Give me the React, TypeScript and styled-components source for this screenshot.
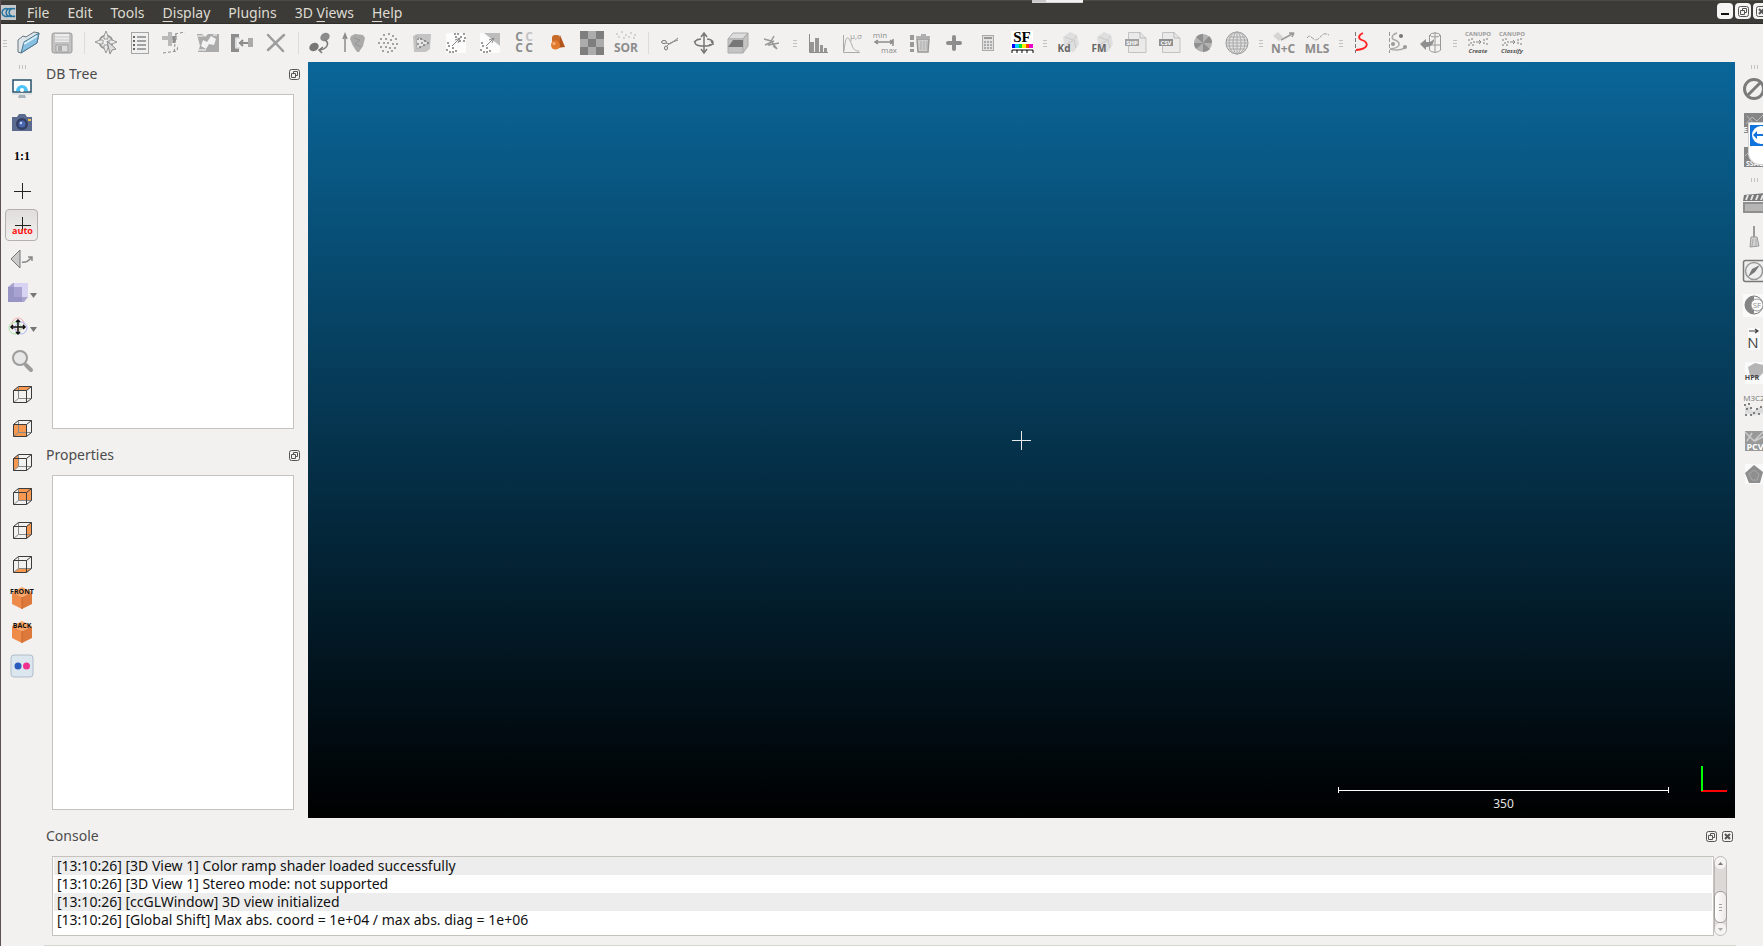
import React from "react";
import styled, { createGlobalStyle, css } from "styled-components";

const GlobalStyle = createGlobalStyle`
  * { box-sizing: border-box; }
  body { margin: 0; background: #f2f1f0; }
  button { font: inherit; color: inherit; background: none; border: 0; margin: 0; padding: 0; }
`;

const Window = styled.div`
  display: flex;
  flex-direction: column;
  height: 100vh;
  overflow: hidden;
  border-left: 1px solid #5e5054;
  background: #f2f1f0;
  color: #4c4c4c;
  font-family: "Noto Sans", "Open Sans", sans-serif;
  font-size: 14px;
`;

const MenuBar = styled.header`
  position: relative;
  display: flex;
  align-items: center;
  flex: none;
  height: 24px;
  background: #3c3b37;
  border-top: 1px solid #4b4a43;
  border-bottom: 1px solid #2f2e2b;
  color: #dfdbd2;
`;

const Menus = styled.nav`
  display: flex;
  margin-left: 2px;
`;

const MenuButton = styled.button`
  padding: 2px 9px 0;
  line-height: 20px;
`;

const Mnemonic = styled.span`
  text-decoration: underline;
  text-underline-offset: 3px;
  text-decoration-thickness: 1px;
`;

const WindowButtons = styled.div`
  display: flex;
  gap: 2px;
  margin: 0 -6px 2px auto;
`;

const WindowButton = styled.button`
  display: grid;
  place-items: center;
  width: 16px;
  height: 16px;
  border-radius: 4px;
  background: #f6f5f4;
`;

const HiddenPanelTab = styled.div`
  position: absolute;
  top: -1px;
  left: calc(58% + 9px);
  width: 51px;
  height: 3px;
  background: linear-gradient(90deg, #c9c9c9 14px, #f2f2f2 14px);
  border-bottom: 1px solid #d5d5d5;
`;

const TopToolbar = styled.div`
  display: flex;
  align-items: center;
  flex: none;
  height: 38px;
  margin-left: -2px;
`;

const SideToolbar = styled.div<{ $width: number; $inset: number }>`
  display: flex;
  flex-direction: column;
  flex: none;
  width: ${(p) => p.$width}px;
  padding-left: ${(p) => p.$inset}px;
  overflow: hidden;
`;

const ToolButton = styled.button<{ $pressed?: boolean }>`
  display: flex;
  align-items: center;
  justify-content: center;
  flex: none;
  width: 34px;
  height: 34px;
  svg { display: block; flex: none; overflow: visible; }
  ${(p) =>
    p.$pressed &&
    css`
      height: 32px;
      margin: 1px 0;
      width: 33px;
      border: 1px solid #b4b1ad;
      border-radius: 4px;
      background: linear-gradient(#e0dedc, #f0efee);
    `}
`;

const Grip = styled.div<{ $side?: boolean }>`
  flex: none;
  width: ${(p) => (p.$side ? "34px" : "12px")};
  height: ${(p) => (p.$side ? "10px" : "38px")};
  display: flex;
  flex-direction: ${(p) => (p.$side ? "row" : "column")};
  align-items: center;
  justify-content: center;
  gap: 2px;
  i {
    width: ${(p) => (p.$side ? "1px" : "4px")};
    height: ${(p) => (p.$side ? "4px" : "1px")};
    background: #c4c2c0;
  }
  ${SideToolbar} button + & { margin: 1px 0; }
`;

const Separator = styled.div`
  flex: none;
  width: 10px;
  height: 22px;
  background: linear-gradient(#dddbd9, #dddbd9) center / 1px 100% no-repeat;
`;

const Main = styled.div`
  display: flex;
  flex: 1;
  min-height: 0;
`;

const Center = styled.main`
  display: flex;
  flex-direction: column;
  flex: 1;
  min-width: 0;
`;

const Workspace = styled.div`
  display: flex;
  flex: 1;
  min-height: 0;
  padding-right: 1px;
`;

const Docks = styled.aside`
  display: flex;
  flex-direction: column;
  gap: 14px;
  flex: none;
  width: 264px;
  padding-bottom: 8px;
`;

const Dock = styled.section`
  display: flex;
  flex-direction: column;
  flex: 1;
`;

const DockTitle = styled.div<{ $right: number }>`
  display: flex;
  align-items: center;
  gap: 5px;
  flex: none;
  height: 24px;
  padding: 0 ${(p) => p.$right}px 0 2px;
  h2 {
    margin: 0 auto 0 0;
    font-size: 14px;
    font-weight: 400;
    line-height: 20px;
  }
`;

const DockButton = styled.button`
  width: 11px;
  height: 11px;
  svg { display: block; }
`;

const DockBody = styled.div`
  flex: 1;
  margin: 8px 14px 0 8px;
  border: 1px solid #c6c3bf;
  background: #fff;
`;

const Viewport = styled.div`
  position: relative;
  flex: 1;
  background: linear-gradient(#0a6699, #000);
`;

const Crosshair = styled.svg`
  position: absolute;
  left: calc(50% - 10px);
  top: calc(50% - 9px);
`;

const ScaleBar = styled.div`
  position: absolute;
  right: 66px;
  bottom: 4px;
  width: 331px;
  color: #e4e4e4;
  font-size: 12px;
  line-height: 20px;
  text-align: center;
  svg { display: block; width: 100%; }
`;

const Axes = styled.svg`
  position: absolute;
  right: 8px;
  bottom: 26px;
`;

const Console = styled.section`
  flex: none;
  padding: 6px 0 9px;
  border-bottom: 1px solid #d8d6d3;
`;

const ConsoleBody = styled.div`
  display: flex;
  height: 80px;
  margin: 8px 9px 0 8px;
`;

const Log = styled.ol`
  flex: 1;
  margin: 0;
  padding: 0 1px;
  list-style: none;
  border: 1px solid #c6c3bf;
  background: #fff;
  color: #111;
  line-height: 18px;
  li { padding-left: 3px; white-space: nowrap; }
  li:nth-child(odd) { background: #ededed; }
`;

const ScrollTrack = styled.div`
  display: flex;
  flex-direction: column;
  align-items: center;
  flex: none;
  width: 13px;
  border: 1px solid #bcb8b4;
  border-radius: 7px;
  background: #dcd9d6;
`;

const ScrollArrow = styled.button`
  width: 11px;
  height: 12px;
  border-radius: 6px;
  background: #f4f3f2;
  svg { display: block; margin: auto; }
`;

const ScrollThumb = styled.div`
  display: flex;
  flex-direction: column;
  align-items: center;
  justify-content: center;
  gap: 2px;
  width: 13px;
  height: 32px;
  margin-top: auto;
  border: 1px solid #9f9b97;
  border-radius: 6px;
  background: linear-gradient(90deg, #fff, #eceae8);
  i { width: 3px; height: 1px; background: #a5a29e; }
`;

const RemoteBadge = styled.div`
  position: absolute;
  right: 0;
  top: 122px;
  width: 15px;
  height: 43px;
  overflow: hidden;
  border: 1px solid #d5d5d5;
  border-right: 0;
  border-radius: 2px 0 0 12px;
  background: #fff;
`;

function Icon({ size = 24, children }: { size?: number; children: React.ReactNode }) {
  return (
    <svg width={size} height={size} viewBox="0 0 24 24" fill="none" aria-hidden="true">
      {children}
    </svg>
  );
}

const G = "#8c8c8c";
const L = "#b9b9b9";

const sans = "Open Sans, sans-serif";

function Label({ x = 12, y, size, fill = G, weight = 700, font = sans, italic, children }: {
  x?: number; y: number; size: number; fill?: string; weight?: number; font?: string; italic?: boolean; children: string;
}) {
  return (
    <text x={x} y={y} fontSize={size} fill={fill} fontWeight={weight} fontFamily={font}
      fontStyle={italic ? "italic" : "normal"} textAnchor="middle">{children}</text>
  );
}

function Dots({ at, r = 1, fill = "#666" }: { at: number[][]; r?: number; fill?: string }) {
  return (
    <g fill={fill}>
      {at.map(([x, y]) => <rect key={`${x}-${y}`} x={x - r / 2} y={y - r / 2} width={r} height={r} />)}
    </g>
  );
}

const cloud = [[8, 4], [13, 3], [17, 5], [5, 8], [10, 8], [15, 9], [20, 8], [3, 12], [8, 12], [12, 12], [17, 13], [21, 13], [5, 16], [10, 16], [14, 17], [19, 17], [7, 20], [12, 21], [16, 20]];

const art = {
  open: <><path d="M2 9 7 5l3 1 8-5 5 1-2 10L5 22l-3-1z" fill="#dfe6ea" stroke="#66767f" /><path d="m5 22 3-11L23 2l-2 10z" fill="#86bfe0" stroke="#4c7893" /><path d="m8 13 13-8" stroke="#dcf0fb" strokeWidth="2" /></>,
  save: <><rect x="2" y="2" width="20" height="20" rx="2" fill="#c2c2c2" stroke="#9c9c9c" /><path d="M5 3h14v8H5z" fill="#ececec" /><path d="M5 6h14M5 9h14" stroke="#c6c6c6" /><path d="M6 14h12v7H6z" fill="#dadada" stroke="#a0a0a0" /><path d="M8 15h4v5H8z" fill="#aaa" /></>,
  pick: <><circle cx="12" cy="11" r="6.500" stroke={G} strokeWidth="1.500" /><path d="m12 0 2 5v3h-4V5zM1 11l5-2h3v4H6zM23 11l-5-2h-3v4h3zM10 14h4v3l-2 5-2-5z" fill="#ececec" stroke="#999" /><path d="m13 10 9 8-4 1-2 4z" fill="#ddd" stroke={G} /></>,
  list: <><rect x="3.500" y="1.500" width="17" height="21" fill="#f0f0f0" stroke="#a5a5a5" /><path d="M9 6h9M9 10h9M9 14h9M9 18h9" stroke="#888" strokeWidth="1.500" /><Dots r={2} at={[[6, 6], [6, 10], [6, 14], [6, 18]]} /></>,
  clone: <><path d="M8 1v14M0 7h15" stroke={L} strokeWidth="4" /><path d="m13 3 10-2M14 3l-2 19M1 22l14-2 1-6" stroke={G} strokeDasharray="3 2" /><path d="M12 5v7" stroke={G} strokeWidth="3" /></>,
  merge: <><path d="M1 3h5l3 3 3-3h11v18H2l2-6z" fill="#ababab" /><path d="m7 9 4 2 4-6 5 3-2 6-5-1-3 5-5-3z" fill="#f3f3f3" /><path d="M2 5h5M17 4h4M3 19h7" stroke="#d5d5d5" strokeWidth="2" /></>,
  subtract: <><path d="M9 5H3v14h6" stroke="#8d8d8d" strokeWidth="4" /><path d="M10 7H6v10h4" stroke="#d8d8d8" strokeWidth="1.500" /><path d="M18 12H9m4-3-3 3 3 3" stroke={G} strokeWidth="2" /><path d="M18 7h5v9h-5z" fill="#aaa" /></>,
  del: <path d="m4 4 15 16M20 4 4 19" stroke="#9c9c9c" strokeWidth="2.500" strokeLinecap="round" />,
  transform: <><ellipse cx="6" cy="16" rx="5" ry="4" fill="#777" transform="rotate(-35 6 16)" /><ellipse cx="17" cy="6" rx="5" ry="4" fill="#8b8b8b" transform="rotate(-35 17 6)" /><path d="M17 9c5 3 2 9-5 10m3-3-4 3 3 3" stroke="#777" strokeWidth="1.500" /></>,
  normals: <><path d="M3 21V4M1 8l2-5 2 5" stroke={G} strokeWidth="1.500" /><path d="m9 5 4-2 8 1 2 3-2 8-4 6h-2l-4-6-3-7z" fill="#aaa" /><path d="m12 7 6 2-5 4 6 3" stroke="#959595" /></>,
  points: <Dots at={cloud} r={1.500} />,
  mesh: <><path d="m3 5 4-2h14l-1 15-4 3H4z" fill="#c4c4c4" /><path d="m6 5 1 13 12-6z" fill="#e6e6e6" stroke="#aaa" /><Dots at={[[8, 8], [8, 13], [11, 8], [12, 12], [10, 16], [15, 10], [14, 14], [18, 12]]} r={1.500} /></>,
  c2c: <><rect width="20" height="20" x="2" y="2" fill="#fcfcfc" /><Dots at={[[4, 12], [5, 15], [3, 19], [6, 21], [9, 17], [9, 21], [12, 20], [14, 3], [17, 6], [20, 3], [21, 7], [20, 10], [16, 10], [12, 6], [11, 3]]} r={1.600} /><path d="m8 15 7-7m-4 1 5-2-2 5" stroke="#888" /></>,
  c2m: <><rect width="20" height="20" x="2" y="2" fill="#fcfcfc" /><path d="M6 2h16v13z" fill="#bcbcbc" /><Dots at={[[4, 12], [5, 15], [3, 19], [6, 21], [9, 17], [9, 21], [12, 20]]} r={1.600} /><path d="m8 15 7-7m-4 1 5-2-2 5" stroke="#888" /></>,
  cccc: <><Label x={7} y={10} size={12}>C</Label><Label x={17} y={10} size={12} fill="#c4c4c4">C</Label><Label x={7} y={21} size={12}>C</Label><Label x={17} y={21} size={12}>C</Label></>,
  primitives: <><path d="m14 4 5 12-8 1z" fill="#b3541b" /><rect x="6" y="4" width="8" height="8" rx="3" fill="#c86a28" /><circle cx="9.500" cy="14" r="4.500" fill="#e07b2f" /><circle cx="8" cy="12.500" r="1.500" fill="#f6b27c" /></>,
  checker: <><path d="M0 0h24v24H0z" fill="#acacac" /><path d="M0 0h8v8H0zM16 0h8v8h-8zM8 8h8v8H8zM0 16h8v8H0zM16 16h8v8h-8z" fill="#7e7e7e" /></>,
  sor: <><Dots at={[[3, 3], [8, 1], [12, 4], [17, 2], [21, 4], [5, 6], [10, 7], [15, 6], [20, 7]]} r={1.500} fill="#bbb" /><Label y={21} size={12}>SOR</Label></>,
  scissors: <><ellipse cx="6" cy="11" rx="2.500" ry="1.500" stroke="#777" /><ellipse cx="8" cy="17" rx="1.500" ry="2" stroke="#777" /><path d="m8 12 4 1 8-6M9 15l3-3 8-3" stroke="#888" /></>,
  rotate: <><path d="M12 3v18M9 6l3-4 3 4M9 18l3 4 3-4" stroke="#777" strokeWidth="1.500" /><path d="M9 8c-8 1-8 6 0 7M15 8c8 1 8 6 0 7H8m11-5 2 3-4 1M6 8l-4 3" stroke="#777" strokeWidth="1.500" /></>,
  section: <><path d="M7 2h15l-5 6H2z" fill="#ddd" stroke="#aaa" /><path d="M2 8h15v14H2zM17 8l5-6v13l-5 7" fill="#c4c4c4" stroke="#aaa" /><path d="m2 16 5-7h10v7z" fill="#777" /></>,
  polyline: <path d="m14 5-5 9 10-2M4 8l7 2 6 8-4-3M5 14l9-4" stroke="#999" strokeWidth="1.500" />,
  histogram: <><path d="M3.500 3v18.500H22" stroke={G} /><path d="M4 11h4v10H4zM9 7h4v14H9zM14 14h3v7h-3zM18 17h3v4h-3z" fill="#969696" /></>,
  stat: <><path d="M3.500 4v17.500H20M4 20C6 0 9 7 12 14c1 4 3 6 7 6" stroke="#aaa" /><Label x={16} y={8} size={8} weight={400} fill="#999">μ,σ</Label></>,
  minmax: <><Label x={6} y={7} size={8} weight={400}>min</Label><Label x={15} y={22} size={8} weight={400}>max</Label><path d="M1 11h17M4 9l-3 2 3 2M16 9l3 2-3 2M19 8v7" stroke={G} strokeWidth="1.500" /></>,
  delsf: <><path d="M4 4v17" stroke="#999" strokeWidth="4" strokeDasharray="5 2" /><path d="M8 6h14M13 4h5M9 8h12l-1 13H10z" fill="#cfcfcf" stroke="#999" strokeWidth="1.500" /><path d="M13 10v9M16 10v9M19 10v9" stroke="#aaa" /></>,
  plus: <path d="M12 6v12M6 12h12" stroke="#8d8d8d" strokeWidth="4" strokeLinecap="round" />,
  calc: <><rect x="6.500" y="4.500" width="11" height="15" fill="#e1e1e1" stroke="#aaa" /><path d="M8 7h8" stroke="#999" strokeWidth="2" /><path d="M8 11h8M8 14h8M8 17h8" stroke="#aaa" strokeWidth="2" strokeDasharray="2 1" /></>,
  sf: <><path d="M1 0h22v23H1z" fill="#fff" /><Label y={11} size={15} fill="#000" font="Liberation Serif, serif">SF</Label><path d="M2 13h3v4H2z" fill="#00f" /><path d="M5 13h4v4H5z" fill="#0cf" /><path d="M9 13h3v4H9z" fill="#0d3" /><path d="M12 13h4v4h-4z" fill="#fe0" /><path d="M16 13h3v4h-3z" fill="#f40" /><path d="M19 13h4v4h-4z" fill="#e0c" /><path d="M2 22v-3h21v3M7 19v3M12 19v3M17 19v3" stroke="#000" /></>,
  kd: <><path d="M7 6 14 1l7 3 2 9-5 8-9-1z" fill="#dedede" /><path d="m9 6 8 3 4-4M11 13l7-4 2 8" stroke="#c9c9c9" /><Label x={8} y={21} size={10} fill="#666">Kd</Label></>,
  fm: <><path d="M7 6 14 1l7 3 2 9-5 8-9-1z" fill="#dedede" /><path d="m9 6 8 3 4-4M11 13l7-4 2 8" stroke="#c9c9c9" /><Label x={9} y={21} size={10} fill="#666">FM</Label></>,
  shp: <><path d="M4.500 1.500H16l6 6v14H4.500z" fill="#eaeaea" stroke="#c2c2c2" /><path d="M16 1v6h6" stroke="#b9b9b9" /><rect x="1" y="8" width="14" height="7" fill="#a2a2a2" /><Label x={8} y={14} size={6} fill="#fff">SHP</Label></>,
  csv: <><path d="M4.500 1.500H16l6 6v14H4.500z" fill="#eaeaea" stroke="#c2c2c2" /><path d="M16 1v6h6" stroke="#b9b9b9" /><rect x="1" y="8" width="14" height="7" fill="#8f8f8f" /><Label x={8} y={14} size={6} fill="#fff">CSV</Label></>,
  pie: <><circle cx="11" cy="12" r="9" fill="#b2b2b2" /><path d="m11 12 6-7a9 9 0 0 1 3 7zM11 12l-7 6a9 9 0 0 1-2-6zM11 12v9a9 9 0 0 0 7-3zM11 12V3a9 9 0 0 0-7 3z" fill="#8f8f8f" /></>,
  sphere: <><circle cx="11" cy="12" r="11" fill="#e2e2e2" stroke="#999" /><path d="M11 1v22M1 9h20M1 15h20M0 12h22M3 6h16M3 18h16" stroke="#aaa" /><ellipse cx="11" cy="12" rx="4" ry="11" stroke="#aaa" /><ellipse cx="11" cy="12" rx="8" ry="11" stroke="#aaa" /></>,
  nc: <><path d="m1 5 5-4 5 5-4 4z" fill="#d4d4d4" /><path d="m9 9 13-7h-5m5 0-2 4" stroke="#999" strokeWidth="1.500" /><Label x={11} y={22} size={12}>N+C</Label></>,
  mls: <><path d="M1 7c4-6 6 5 11 1s5-7 11-4" stroke="#999" strokeDasharray="4 1" /><Label x={11} y={22} size={12}>MLS</Label></>,
  spline: <><path d="M3.500 1v21" stroke="#777" strokeDasharray="4 2" /><path d="M11 2C6 4 6 8 10 9c8 3 6 9-6 10" stroke="#f22" strokeWidth="1.800" /></>,
  splinePts: <><path d="M3.500 1v21" stroke="#999" strokeDasharray="4 2" /><path d="M11 2C5 4 5 8 9 9c7 3 5 8-5 9 7 2 11 1 15-1" stroke="#aaa" strokeWidth="1.500" /><circle cx="15" cy="5" r="2" fill="#777" /><circle cx="7" cy="13" r="2" fill="#999" /><circle cx="19" cy="16" r="2" fill="#999" /></>,
  unroll: <><ellipse cx="15" cy="4" rx="5" ry="2" stroke="#999" /><path d="M9.500 4v15c2 3 9 3 11 0V4M15 1v21M10 14h10" stroke="#999" /><path d="m0 13 6-5v3c4 0 5 0 8-3 0 6-4 8-8 8v3z" fill="#8f8f8f" /></>,
  canupoCreate: <><Label y={5} size={6} fill="#999">CANUPO</Label><Dots at={[[3, 9], [6, 8], [5, 12], [8, 11], [3, 14], [7, 14], [18, 9], [21, 8], [18, 12], [21, 13]]} r={1.500} fill="#888" /><path d="M10 11h5m-2-2 2 2-2 2" stroke="#888" /><Label y={22} size={6} fill="#555" italic>Create</Label></>,
  canupoClassify: <><Label y={5} size={6} fill="#999">CANUPO</Label><Dots at={[[3, 9], [6, 8], [5, 12], [8, 11], [3, 14], [7, 14], [18, 9], [21, 8], [18, 12], [21, 13]]} r={1.500} fill="#888" /><path d="M10 11h5m-2-2 2 2-2 2" stroke="#888" /><Label y={22} size={6} fill="#555" italic>Classify</Label></>,

  display: <><rect x="3" y="3" width="18" height="12" fill="#fff" stroke="#27506b" strokeWidth="1.500" /><path d="M6 14a6 6 0 0 1 12 0z" fill="#4cc3f7" /><circle cx="12" cy="13" r="2" fill="#fff" /><path d="M2 16h20v2H2z" fill="#dde1e4" /><path d="M9 18h6l1 3H8z" fill="#a9b4bb" /></>,
  camera: <><path d="M2 6h5l2-3h6l2 3h5v14H2z" fill="#5b6a8f" /><circle cx="12" cy="13" r="6" fill="#333f63" /><circle cx="12" cy="13" r="3.500" fill="#4967b0" /><circle cx="11" cy="12" r="1.200" fill="#c9d8ff" /><path d="M18 8h3v2h-3z" fill="#f2c14e" /></>,
  one: <Label y={15} size={12} fill="#000" font="Liberation Serif, serif">1:1</Label>,
  pivot: <path d="M12.500 4v16M4 12.500h17" stroke="#222" />,
  auto: <><path d="M12.500 4v14M5 12.500h16" stroke="#222" /><Label x={12.500} y={21} size={9} fill="#f11">auto</Label></>,
  flip: <><path d="M10 3v18L1 12z" fill="#c9c9c9" stroke="#777" /><path d="M12 15c5 1 7-2 10-5m-4 0h4v4" stroke="#888" strokeWidth="1.500" /></>,
  cube: <><path d="m2 6 5-4h15v14l-4 5H2z" fill="#a9a5cf" /><path d="M8 2h14v14H8z" fill="#d6d4f2" /><path d="M2 6h14v15H2z" fill="#8f8bbf" opacity=".65" /></>,
  pan: <><circle cx="12" cy="9" r="6" stroke="#f3aaaa" /><circle cx="9" cy="13" r="6" stroke="#a8e5a8" /><circle cx="15" cy="13" r="6" stroke="#a9b9f3" /><path d="M12 5v14M5 12h14M10 7l2-2 2 2M10 17l2 2 2-2M7 10l-2 2 2 2M17 10l2 2-2 2" stroke="#111" strokeWidth="1.500" /></>,
  zoom: <><circle cx="10" cy="9" r="7" fill="#e7e7e7" stroke="#9c9c9c" strokeWidth="2" /><path d="m16 16 5 5" stroke="#9c9c9c" strokeWidth="4" strokeLinecap="round" /></>,
  stereo: <><rect x="1" y="0" width="22" height="22" rx="3" fill="#dce6ee" stroke="#aebdca" /><circle cx="8" cy="11" r="3.500" fill="#2b5bbd" /><circle cx="16.500" cy="11" r="3.500" fill="#f0328f" /></>,

  forbidden: <><circle cx="12" cy="12" r="9.500" stroke="#7b7b7b" strokeWidth="3" /><path d="m6 18 12-12" stroke="#7b7b7b" strokeWidth="3" /></>,
  edl: <><path d="M2 2h22v20H2z" fill="#858585" /><path d="m4 13 6-7 5 4 6-6M5 5l9 10" stroke="#b9b9b9" /><Label x={8} y={21} size={7} fill="#fff">EDL</Label></>,
  ssao: <><path d="M2 2h22v20H2z" fill="#858585" /><path d="m3 11 6-6 5 7 6-6" stroke="#b9b9b9" /><Label x={13} y={21} size={7} fill="#fff">SSAO</Label></>,
  film: <><path d="M1 11h23v11H1z" fill="#8f8f8f" /><path d="M3 13h20v7H3z" fill="#b5b5b5" /><path d="m1 10 1-6 22-2v8z" fill="#777" /><path d="m4 9 2-5M9 9l2-5M14 9l2-5M19 9l2-5" stroke="#e6e6e6" strokeWidth="2" /></>,
  broom: <><path d="M12 1v13" stroke="#999" strokeWidth="2" /><path d="M9 12h6l2 9-9 1z" fill="#d2d2d2" stroke="#999" /><path d="m11 14-1 7M14 14v7" stroke="#aaa" /></>,
  compass: <><rect x="1.500" y="1.500" width="21" height="21" rx="2" fill="#eee" stroke="#777" strokeWidth="1.500" /><circle cx="12" cy="12" r="8.500" stroke="#999" strokeWidth="1.500" /><path d="m6 18 4-8 8-4-5 7z" fill="#777" /></>,
  csf: <><path d="M1 1h23v23H1z" fill="#fafafa" /><circle cx="12" cy="12" r="9" stroke="#777" /><path d="M12 3a9 9 0 0 0 0 18z" fill="#848484" /><circle cx="15" cy="12" r="6" fill="#fafafa" stroke="#999" /><Label x={15} y={15} size={8} weight={400}>SF</Label></>,
  normalN: <><path d="M6 1h12v22H6z" fill="#fafafa" /><path d="M7 4h9m-3-2 3 2-3 2" stroke="#444" strokeWidth="1.200" /><Label x={11} y={21} size={15} weight={400} fill="#444">N</Label></>,
  hpr: <><path d="M3 1h21v22H3z" fill="#fafafa" /><path d="m6 6 7-4 8 2 1 7-6 6-8-2z" fill="#b5b5b5" /><Label x={10} y={19} size={7} fill="#444">HPR</Label></>,
  m3c2: <><Label x={12} y={6} size={8} weight={400} fill="#777">M3C2</Label><path d="M3 12c6-4 6 6 9 4s5-5 10-3v6c-6-2-9 3-13 1s-4-2-6 0z" fill="#dcdcdc" /><Dots at={[[3, 10], [7, 9], [5, 14], [9, 13], [12, 18], [15, 14], [19, 12], [4, 20], [9, 20], [17, 19], [22, 17]]} r={1.800} /></>,
  pcv: <><path d="M3 2h21v20H3z" fill="#999" /><path d="m3 3 9 9 10-10M5 12l5-8M13 12l9-5" stroke="#ccc" strokeWidth="1.500" /><Label x={13} y={21} size={9} fill="#fff">PCV</Label></>,
  facets: <><path d="M3 1h21v20H3z" fill="#fafafa" /><path d="m12 2 9 7-3 11H7L3 10z" fill="#8e8e8e" /><path d="m12 7 5 4-2 6h-5l-3-6z" stroke="#a9a9a9" /></>,
};

type IconName = keyof typeof art;

const faces: Record<string, string> = {
  top: "M3.500 7.500l5-4h13l-5 4z",
  front: "M3.500 7.500h13v12h-13z",
  left: "M3.500 7.500l5-4v12l-5 4z",
  rear: "M8.500 3.500h13v12h-13z",
  right: "M16.500 7.500l5-4v12l-5 4z",
  bottom: "M3.500 19.500l5-4h13l-5 4z",
};

function WireCube({ face }: { face: string }) {
  return (
    <Icon>
      <path d={faces[face]} fill="#f79850" />
      <path d="M8.500 3.500v12h13M8.500 15.500l-5 4" stroke="#888" />
      <path d="M3.500 7.500h13v12h-13zM3.500 7.500l5-4h13l-5 4M21.500 3.500v12l-5 4" stroke="#3c3c3c" />
    </Icon>
  );
}

function SolidCube({ text }: { text: string }) {
  return (
    <Icon>
      <path d="M12 10v12L2 17V5z" fill="#ee8a4a" />
      <path d="M12 10v12l10-5V5z" fill="#dd7a3b" />
      <path d="m12 0 10 5-10 5L2 5z" fill="#f9a566" />
      <path d="M12 10v12" stroke="#c8642a" />
      <Label y={7} size={7} fill="#111">{text}</Label>
    </Icon>
  );
}

const Grips = ({ side }: { side?: boolean }) => <Grip $side={side}><i /><i /><i /></Grip>;

const topGroups: { lead: "grip" | "line"; tools: [IconName, string][] }[] = [
  { lead: "grip", tools: [["open", "Open"], ["save", "Save"]] },
  { lead: "line", tools: [["pick", "Point picking"], ["list", "Point list picking"], ["clone", "Clone"], ["merge", "Merge"], ["subtract", "Subsample"], ["del", "Delete"]] },
  { lead: "line", tools: [["transform", "Register"], ["normals", "Compute normals"], ["points", "Sample points"], ["mesh", "Mesh"], ["c2c", "Cloud to cloud distance"], ["c2m", "Cloud to mesh distance"], ["cccc", "Label connected components"], ["primitives", "Primitive factory"], ["checker", "Rasterize"], ["sor", "SOR filter"]] },
  { lead: "line", tools: [["scissors", "Segment"], ["rotate", "Translate and rotate"], ["section", "Cross section"], ["polyline", "Trace polyline"]] },
  { lead: "grip", tools: [["histogram", "Histogram"], ["stat", "Fit distribution"], ["minmax", "Filter by value"], ["delsf", "Delete scalar field"], ["plus", "Add scalar field"], ["calc", "Scalar field arithmetic"], ["sf", "Color scale manager"]] },
  { lead: "grip", tools: [["kd", "Kd-tree"], ["fm", "Fast marching"], ["shp", "Export SHP"], ["csv", "Export CSV"], ["pie", "Stereogram"], ["sphere", "Sphere"]] },
  { lead: "grip", tools: [["nc", "Normals and curvature"], ["mls", "MLS smoothing"]] },
  { lead: "grip", tools: [["spline", "Profile"], ["splinePts", "Profile points"], ["unroll", "Unroll"]] },
  { lead: "grip", tools: [["canupoCreate", "CANUPO create"], ["canupoClassify", "CANUPO classify"]] },
];

const menus: [string, string, string][] = [
  ["", "F", "ile"], ["Edit", "", ""], ["Tools", "", ""], ["", "D", "isplay"],
  ["Plugins", "", ""], ["3D ", "V", "iews"], ["", "H", "elp"],
];

const log = [
  "[13:10:26] [3D View 1] Color ramp shader loaded successfully",
  "[13:10:26] [3D View 1] Stereo mode: not supported",
  "[13:10:26] [ccGLWindow] 3D view initialized",
  "[13:10:26] [Global Shift] Max abs. coord = 1e+04 / max abs. diag = 1e+06",
];

function Tool({ name, label, pressed }: { name: IconName; label: string; pressed?: boolean }) {
  return (
    <ToolButton aria-label={label} $pressed={pressed} aria-pressed={pressed}>
      <Icon>{art[name]}</Icon>
    </ToolButton>
  );
}

function DropTool({ name, label }: { name: IconName; label: string }) {
  return (
    <ToolButton aria-label={label} aria-haspopup="menu">
      <Icon>{art[name]}</Icon>
      <svg width="8" height="14" aria-hidden="true"><path d="M0 7h7l-3.500 5z" fill="#777" /></svg>
    </ToolButton>
  );
}

const RestoreGlyph = () => (
  <svg width="11" height="11" viewBox="0 0 11 11" fill="none" stroke="#555" aria-hidden="true">
    <rect x=".5" y=".5" width="10" height="10" rx="2" />
    <path d="M2.500 4.500h4v4h-4zM4.500 4.500v-2h4v4h-2" />
  </svg>
);

const CloseGlyph = () => (
  <svg width="11" height="11" viewBox="0 0 11 11" fill="none" stroke="#555" aria-hidden="true">
    <rect x=".5" y=".5" width="10" height="10" rx="2" />
    <path d="m3 3 5 5M8 3 3 8" strokeWidth="2" />
  </svg>
);

function Panel({ title }: { title: string }) {
  return (
    <Dock aria-label={title}>
      <DockTitle $right={8}>
        <h2>{title}</h2>
        <DockButton aria-label={`Float ${title}`}><RestoreGlyph /></DockButton>
      </DockTitle>
      <DockBody />
    </Dock>
  );
}

export default function App() {
  return (
    <Window>
      <GlobalStyle />
      <MenuBar>
        <svg width="15" height="15" viewBox="0 0 15 15" fill="none" aria-hidden="true">
          <path d="M0 0h15v15H0z" fill="#c5c9cc" />
          <path d="M7 4a4 4 0 1 0 0 7M11 4a4 4 0 1 0 0 7M14 4a4 4 0 1 0 0 7" stroke="#23719f" strokeWidth="1.500" />
        </svg>
        <Menus>
          {menus.map(([before, key, after]) => (
            <MenuButton key={before + key + after}>{before}{key && <Mnemonic>{key}</Mnemonic>}{after}</MenuButton>
          ))}
        </Menus>
        <WindowButtons>
          <WindowButton aria-label="Minimize"><svg width="8" height="10" aria-hidden="true"><path d="M0 7h8v2H0z" fill="#111" /></svg></WindowButton>
          <WindowButton aria-label="Restore"><RestoreGlyph /></WindowButton>
          <WindowButton aria-label="Close"><CloseGlyph /></WindowButton>
        </WindowButtons>
        <HiddenPanelTab />
      </MenuBar>

      <TopToolbar role="toolbar" aria-label="Main tools">
        {topGroups.map((group, i) => (
          <React.Fragment key={i}>
            {group.lead === "grip" ? <Grips /> : <Separator />}
            {group.tools.map(([name, label]) => <Tool key={name} name={name} label={label} />)}
          </React.Fragment>
        ))}
      </TopToolbar>

      <Main>
        <SideToolbar $width={43} $inset={4} role="toolbar" aria-label="View tools">
          <Grips side />
          <Tool name="display" label="Display options" />
          <Tool name="camera" label="Screenshot" />
          <Tool name="one" label="Zoom 1:1" />
          <Tool name="pivot" label="Set pivot" />
          <Tool name="auto" label="Auto pivot" pressed />
          <Tool name="flip" label="Flip view" />
          <DropTool name="cube" label="Projection" />
          <DropTool name="pan" label="Pan mode" />
          <Tool name="zoom" label="Zoom" />
          {Object.keys(faces).map((face) => (
            <ToolButton key={face} aria-label={`View ${face}`}><WireCube face={face} /></ToolButton>
          ))}
          <ToolButton aria-label="Front isometric"><SolidCube text="FRONT" /></ToolButton>
          <ToolButton aria-label="Back isometric"><SolidCube text="BACK" /></ToolButton>
          <Tool name="stereo" label="Stereo" />
        </SideToolbar>

        <Center>
          <Workspace>
            <Docks>
              <Panel title="DB Tree" />
              <Panel title="Properties" />
            </Docks>
            <Viewport>
              <Crosshair width="19" height="19" aria-hidden="true"><path d="M9.500 0v19M0 9.500h19" stroke="#e8e8e8" /></Crosshair>
              <ScaleBar>
                <svg height="7" aria-hidden="true">
                  <rect y="3" width="100%" height="1" fill="#fff" />
                  <rect width="1" height="6" fill="#fff" />
                  <rect x="330" width="1" height="6" fill="#fff" />
                </svg>
                350
              </ScaleBar>
              <Axes width="26" height="26" aria-hidden="true">
                <path d="M0 25h26" stroke="#f00" strokeWidth="2" />
                <path d="M1 0v25" stroke="#0f0" strokeWidth="2" />
              </Axes>
            </Viewport>
          </Workspace>

          <Console aria-label="Console">
            <DockTitle $right={3}>
              <h2>Console</h2>
              <DockButton aria-label="Float console"><RestoreGlyph /></DockButton>
              <DockButton aria-label="Close console"><CloseGlyph /></DockButton>
            </DockTitle>
            <ConsoleBody>
              <Log>{log.map((line) => <li key={line}>{line}</li>)}</Log>
              <ScrollTrack>
                <ScrollArrow aria-label="Scroll up"><svg width="5" height="3" aria-hidden="true"><path d="M0 3h5L2.500 0z" fill="#777" /></svg></ScrollArrow>
                <ScrollThumb><i /><i /><i /></ScrollThumb>
                <ScrollArrow aria-label="Scroll down"><svg width="5" height="3" aria-hidden="true"><path d="M0 0h5L2.500 3z" fill="#aaa" /></svg></ScrollArrow>
              </ScrollTrack>
            </ConsoleBody>
          </Console>
        </Center>

        <SideToolbar $width={27} $inset={1} role="toolbar" aria-label="Plugin tools">
          <Grips side />
          <Tool name="forbidden" label="Remove filter" />
          <Tool name="edl" label="EDL shader" />
          <Tool name="ssao" label="SSAO shader" />
          <Grips side />
          <Tool name="film" label="Animation" />
          <Tool name="broom" label="Virtual broom" />
          <Tool name="compass" label="Compass" />
          <Tool name="csf" label="CSF filter" />
          <Tool name="normalN" label="Hough normals" />
          <Tool name="hpr" label="Hidden point removal" />
          <Tool name="m3c2" label="M3C2 distance" />
          <Tool name="pcv" label="PCV" />
          <Tool name="facets" label="Facets" />
        </SideToolbar>
      </Main>

      <RemoteBadge>
        <svg width="22" height="24" viewBox="0 0 22 24" fill="none" aria-hidden="true">
          <rect x="1" y="2" width="22" height="21" fill="#0e73dd" />
          <circle cx="12" cy="12" r="9" fill="#fff" />
          <path d="M4 12 8 8v3h8v2H8v3z" fill="#0e73dd" />
        </svg>
      </RemoteBadge>
    </Window>
  );
}
